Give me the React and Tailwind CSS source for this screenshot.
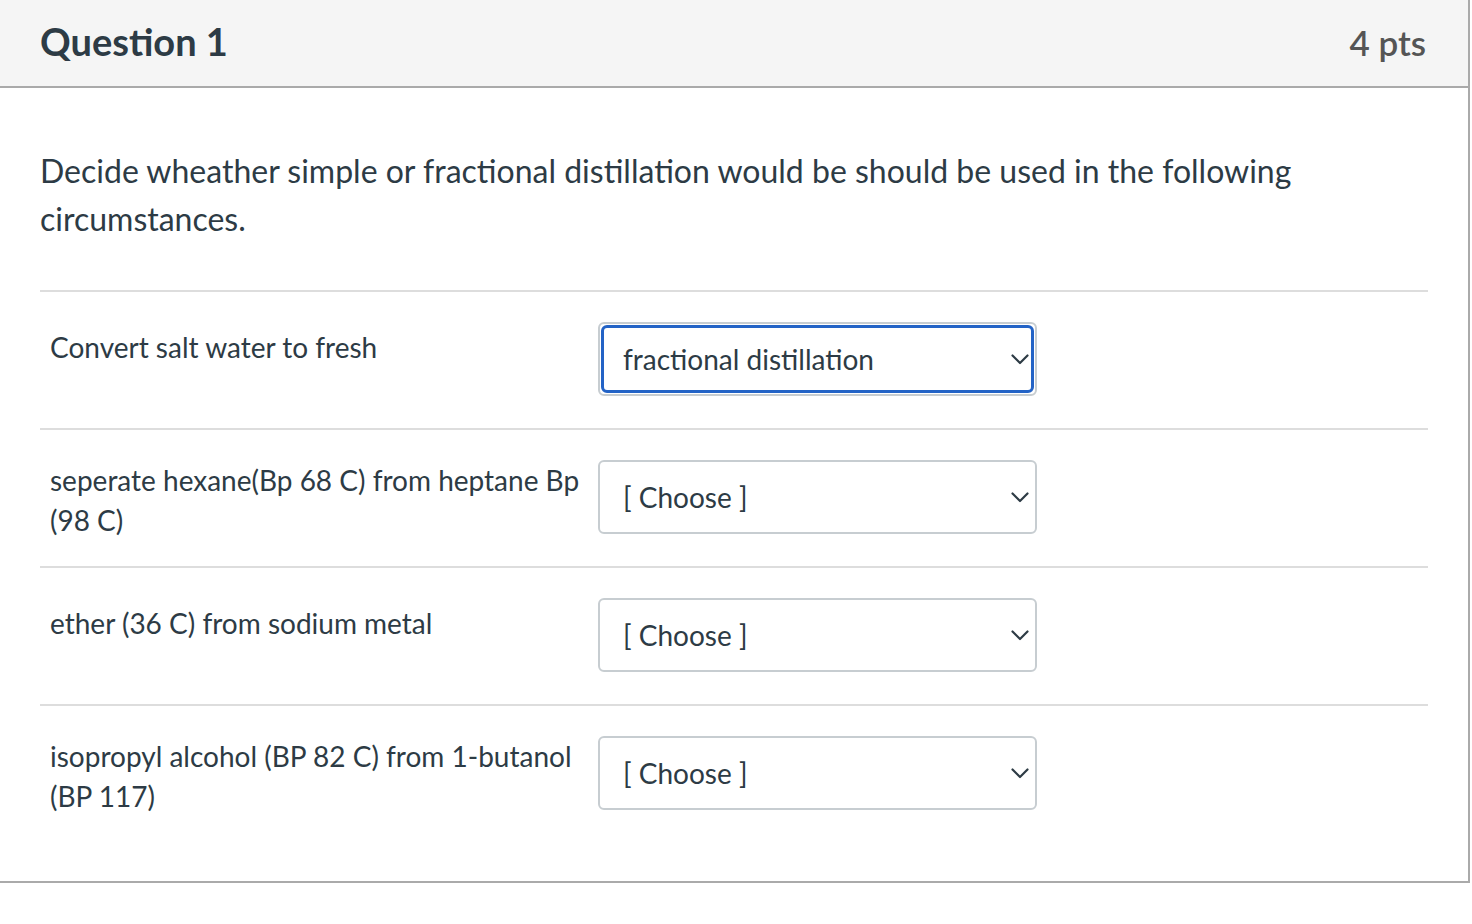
import React from 'react';

const rows = [
  { label: 'Convert salt water to fresh', value: 'fractional distillation', focused: true },
  { label: 'seperate hexane(Bp 68 C) from heptane Bp (98 C)', value: '[ Choose ]' },
  { label: 'ether (36 C) from sodium metal', value: '[ Choose ]' },
  { label: 'isopropyl alcohol (BP 82 C) from 1-butanol (BP 117)', value: '[ Choose ]' },
];

function Chevron() {
  return (
    <svg width="18" height="11" viewBox="0 0 18 11" fill="none" className="shrink-0">
      <path d="M1.5 1.5 L9 9 L16.5 1.5" stroke="#2d3b45" strokeWidth="2.2" strokeLinecap="round" strokeLinejoin="round" />
    </svg>
  );
}

function FakeSelect({ value, focused }) {
  if (focused) {
    return (
      <div className="w-[439px] h-[74px] shrink-0 border-2 border-[#c7cdd1] rounded-[6px] p-[1px] bg-white">
        <div className="h-full border-[3px] border-[#2363c6] rounded-[6px] flex items-center justify-between pl-[19px] pr-[2px]">
          <span className="text-[28px] text-[#2d3b45]">{value}</span>
          <Chevron />
        </div>
      </div>
    );
  }
  return (
    <div className="w-[439px] h-[74px] shrink-0 border-2 border-[#c7cdd1] rounded-[6px] bg-white flex items-center justify-between pl-[23px] pr-[6px]">
      <span className="text-[28px] text-[#2d3b45]">{value}</span>
      <Chevron />
    </div>
  );
}

export default function App() {
  return (
    <div className="w-[1472px] h-[924px] bg-white" style={{ fontFamily: 'Lato, "Noto Sans", sans-serif' }}>
      <div className="w-[1470px] border-r-2 border-b-2 border-[#aaaaaa]">
        {/* header */}
        <div className="h-[88px] bg-[#f5f5f5] border-b-2 border-[#aaaaaa] flex items-center justify-between pl-[40px] pr-[42px]">
          <h2 className="text-[38px] font-bold text-[#2d3b45] leading-none mb-[4px]">Question 1</h2>
          <span className="text-[35px] font-semibold text-[#555555] leading-none mb-[2px]">4 pts</span>
        </div>

        {/* body */}
        <div className="pl-[40px] pr-[40px] pt-[59px] pb-[39px]">
          <p className="text-[32px] leading-[48px] text-[#2d3b45] pr-[120px]">
            Decide wheather simple or fractional distillation would be should be used in the following circumstances.
          </p>

          <div className="mt-[47px]">
            {rows.map((r, i) => (
              <div key={i} className="h-[138px] border-t-2 border-[#dddddd] pt-[30px] flex items-start">
                <div className={`w-[558px] shrink-0 pl-[10px] pr-[10px] text-[28px] leading-[40px] text-[#2d3b45] ${r.label.length > 32 ? 'pt-[0px]' : 'pt-[5px]'}`}>
                  {r.label}
                </div>
                <FakeSelect value={r.value} focused={r.focused} />
              </div>
            ))}
          </div>
        </div>
      </div>
    </div>
  );
}
